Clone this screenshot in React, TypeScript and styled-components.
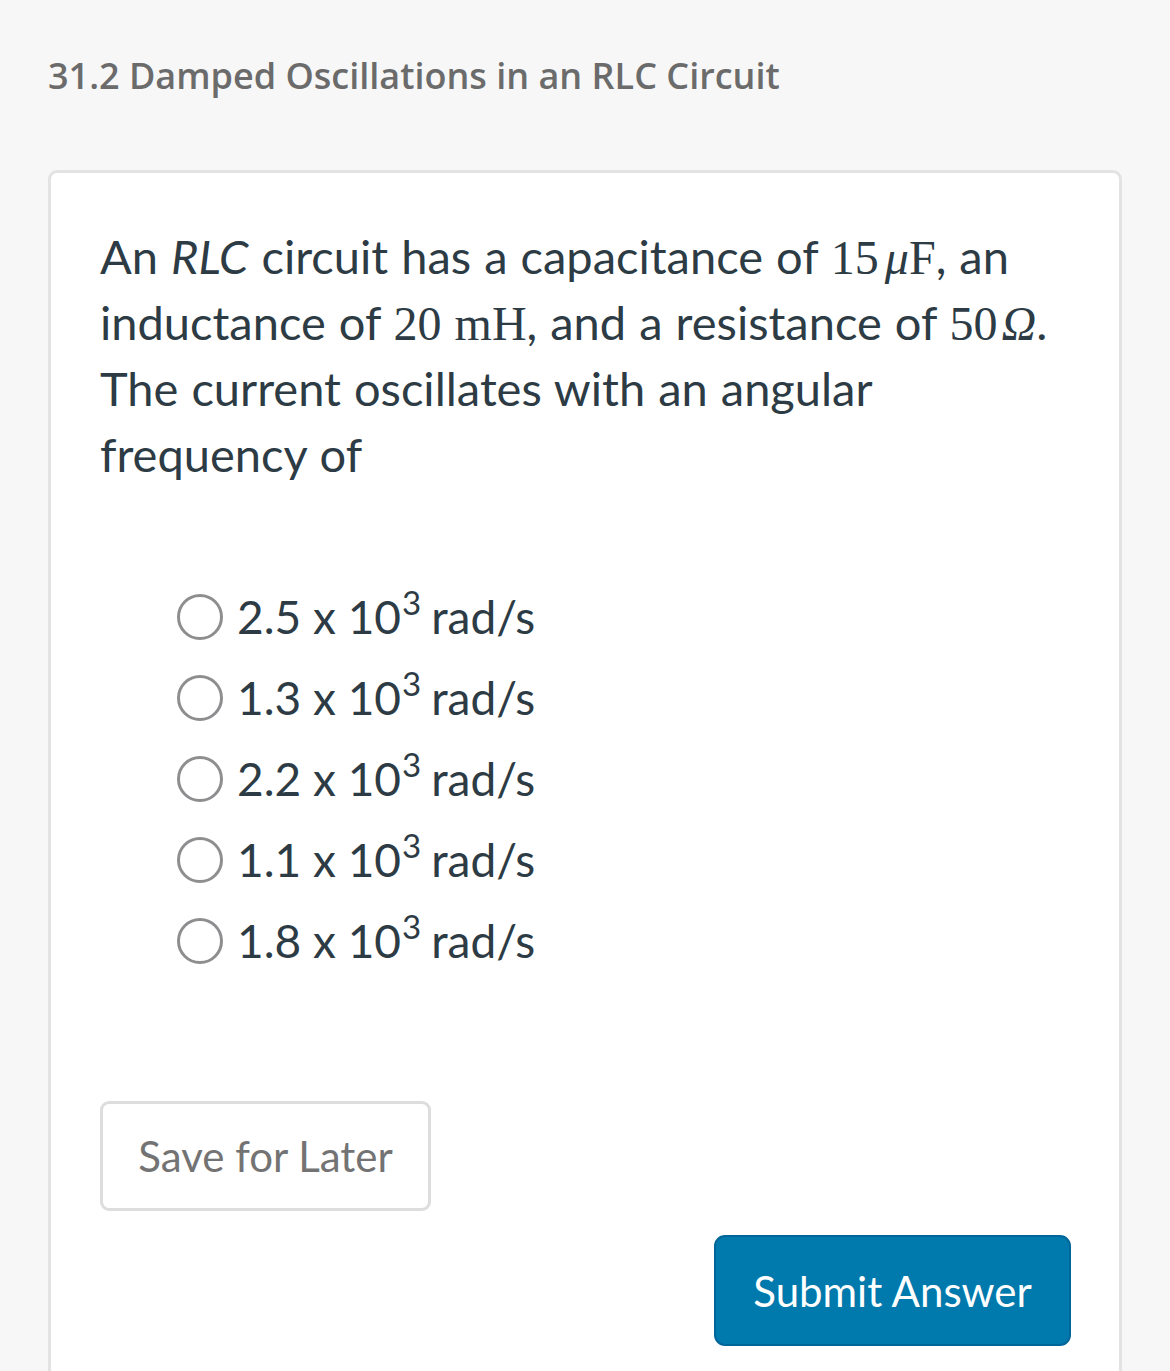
import styled, { createGlobalStyle } from "styled-components";

const GlobalStyle = createGlobalStyle`
  html, body {
    margin: 0;
    padding: 0;
    background: #f7f7f7;
  }
  body {
    font-family: Lato, "Open Sans", sans-serif;
  }
`;

const Page = styled.div`
  padding: 0 48px 0 48px;
  height: 1371px;
  overflow: hidden;
`;

const Title = styled.h1`
  margin: 0;
  padding: 52px 0 0 0;
  font-family: "Open Sans", sans-serif;
  font-weight: 600;
  font-size: 36px;
  line-height: 48px;
  color: #6b6b6b;
`;

const Card = styled.div`
  margin-top: 70px;
  background: #fff;
  border: 3px solid #e3e3e3;
  border-bottom: none;
  border-radius: 9px 9px 0 0;
  padding: 50px 48px 40px 49px;
  min-height: 1300px;
`;

const Question = styled.p`
  margin: 0;
  font-size: 47px;
  line-height: 66px;
  color: #2d3b45;
  word-spacing: 1px;
`;

const Math = styled.span<{ $gap?: number }>`
  font-family: "Liberation Serif", "DejaVu Serif", serif;
  font-size: 48px;
  line-height: 0;
  margin-right: ${(p) => p.$gap ?? 0}px;
`;

const MathItalic = styled(Math)`
  font-style: italic;
`;

const Options = styled.div`
  display: flex;
  flex-direction: column;
  gap: 35px;
  margin: 107px 0 0 77px;
`;

const Option = styled.label`
  display: flex;
  align-items: center;
  gap: 14px;
  font-size: 46px;
  line-height: 46px;
  color: #2d3b45;
`;

const Radio = styled.span`
  width: 40px;
  height: 40px;
  border: 3px solid #8e8e90;
  border-radius: 50%;
  flex: none;
`;

const Sup = styled.sup`
  font-size: 33px;
  line-height: 0;
  vertical-align: 0;
  position: relative;
  top: -19px;
  margin-left: 1px;
  margin-right: 10px;
`;

const SaveButton = styled.button`
  margin-top: 137px;
  width: 331px;
  height: 110px;
  background: #fff;
  border: 3px solid #dddddd;
  border-radius: 9px;
  font-family: Lato, sans-serif;
  font-size: 42px;
  color: #737373;
  padding: 0;
  display: block;
`;

const Footer = styled.div`
  display: flex;
  justify-content: flex-end;
  margin-top: 24px;
`;

const SubmitButton = styled.button`
  width: 357px;
  height: 111px;
  background: #0079ad;
  border: 2px solid #00669a;
  border-radius: 11px;
  font-family: Lato, sans-serif;
  font-size: 42px;
  color: #fff;
  padding: 0;
`;

const answers = ["2.5", "1.3", "2.2", "1.1", "1.8"];

export default function App() {
  return (
    <>
      <GlobalStyle />
      <Page>
        <Title>31.2 Damped Oscillations in an RLC Circuit</Title>
        <Card>
          <Question>
            An <i>RLC</i> circuit has a capacitance of <Math $gap={6}>15</Math>
            <MathItalic>μ</MathItalic>
            <Math>F</Math>, an inductance of <Math>20 mH</Math>, and a
            resistance of <Math $gap={4}>50</Math>
            <MathItalic>Ω</MathItalic>. The current oscillates with an angular
            frequency of
          </Question>
          <Options>
            {answers.map((a) => (
              <Option key={a}>
                <Radio />
                <span>
                  {a} x 10<Sup>3</Sup>rad/s
                </span>
              </Option>
            ))}
          </Options>
          <SaveButton>Save for Later</SaveButton>
          <Footer>
            <SubmitButton>Submit Answer</SubmitButton>
          </Footer>
        </Card>
      </Page>
    </>
  );
}
